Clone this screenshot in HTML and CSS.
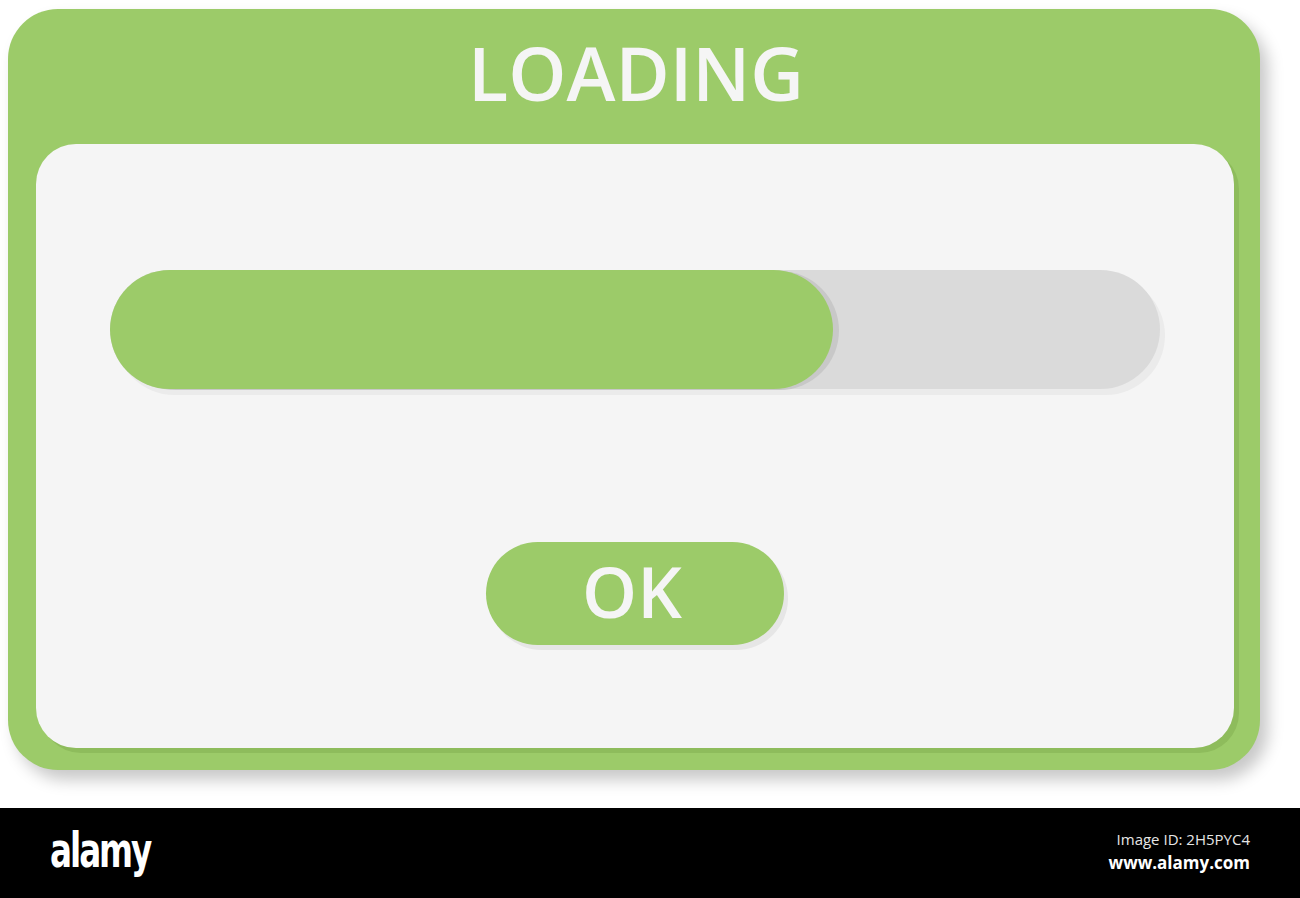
FILE: index.html
```html
<!DOCTYPE html>
<html lang="en">
<head>
  <meta charset="UTF-8" />
  <meta name="viewport" content="width=device-width, initial-scale=1.0"/>
  <title>Loading</title>
  <link rel="stylesheet" href="styles.css">
</head>
<body>
  <div class="stage">
    <div class="dialog">
      <div class="dialog-head">
        <h1 class="title">LOADING</h1>
      </div>
      <div class="dialog-body">
        <div class="track">
          <div class="fill" style="width: 68.9%"></div>
        </div>
        <button class="btn">OK</button>
      </div>
    </div>
  </div>

  <div class="footer">
    <div class="logo">alamy</div>
    <div class="meta">
      <div class="image-id">Image ID: 2H5PYC4</div>
      <div class="site">www.alamy.com</div>
    </div>
  </div>
</body>
</html>
```

FILE: styles.css
```css
* {
  margin: 0;
  padding: 0;
  box-sizing: border-box;
}

body {
  width: 1300px;
  height: 898px;
  background: #ffffff;
  overflow: hidden;
  font-family: 'Open Sans', sans-serif;
}

.stage {
  height: 808px;
  padding: 9px 40px 0 8px;
}

.dialog {
  width: 1252px;
  height: 761px;
  background: #9ccb69;
  border-radius: 50px;
  box-shadow: 8px 10px 16px rgba(0, 0, 0, 0.22);
  display: flex;
  flex-direction: column;
  padding: 0 26px 22px 28px;
}

.dialog-head {
  height: 135px;
  display: flex;
  justify-content: center;
  align-items: center;
  padding-bottom: 8px;
}

.title {
  font-size: 74px;
  font-weight: 600;
  line-height: 1;
  color: #f5f5f5;
  letter-spacing: 0;
  margin-left: 2px;
}

.dialog-body {
  flex: 1;
  background: #f5f5f5;
  border-radius: 40px;
  box-shadow: 5px 5px 0 #8ebc5c;
  display: flex;
  flex-direction: column;
  align-items: center;
  padding: 126px 74px 0;
}

.track {
  width: 100%;
  height: 119px;
  border-radius: 60px;
  background: #dadada;
  box-shadow: 5px 6px 0 #ebebeb;
  display: flex;
}

.fill {
  height: 100%;
  border-radius: 60px;
  background: #9ccb69;
  box-shadow: 6px 1px 0 #c8c8c8;
}

.btn {
  margin-top: 153px;
  width: 298px;
  height: 103px;
  border: none;
  border-radius: 52px;
  background: #9ccb69;
  box-shadow: 4px 5px 0 #e6e6e6;
  color: #f5f5f5;
  font-family: 'Open Sans', sans-serif;
  font-size: 70px;
  font-weight: 600;
  line-height: 1;
  letter-spacing: 0;
  cursor: pointer;
  padding: 0 6px 6px 0;
}

.footer {
  height: 90px;
  background: #000000;
  display: flex;
  justify-content: space-between;
  align-items: center;
  padding: 0 50px 0 50px;
}

.logo {
  font-family: 'DejaVu Sans', sans-serif;
  font-weight: bold;
  font-size: 48px;
  color: #ffffff;
  letter-spacing: -3px;
  transform: scaleX(0.68);
  transform-origin: left center;
  margin-top: -6px;
}

.meta {
  display: flex;
  flex-direction: column;
  align-items: flex-end;
  gap: 2px;
  margin-top: -4px;
}

.image-id {
  font-size: 15px;
  color: #e6e6e6;
}

.site {
  font-size: 17px;
  font-weight: bold;
  color: #ffffff;
}
```
